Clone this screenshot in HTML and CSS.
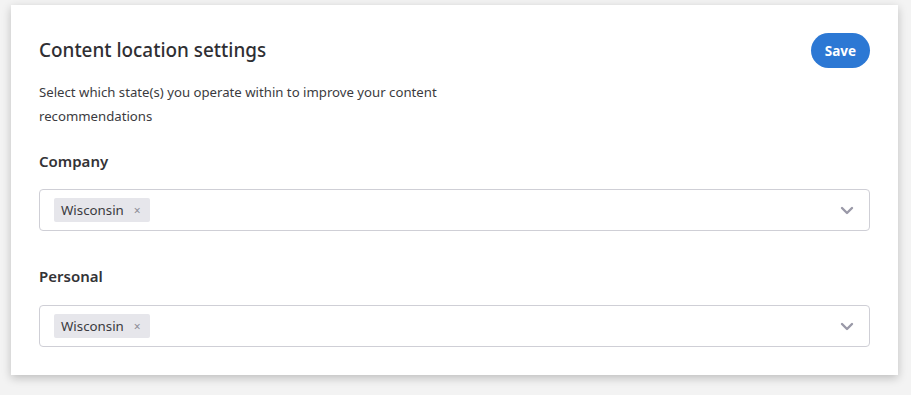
FILE: index.html
```html
<!DOCTYPE html>
<html>
<head>
<meta charset="utf-8">
<link rel="stylesheet" href="styles.css">
</head>
<body>
<div class="card">
  <div class="header">
    <h1 class="title">Content location settings</h1>
    <button class="save">Save</button>
  </div>
  <p class="desc">Select which state(s) you operate within to improve your content recommendations</p>
  <div class="label l-first">Company</div>
  <div class="select">
    <div class="chips"><span class="chip">Wisconsin<span class="x">×</span></span></div>
    <svg class="chev" width="14" height="9" viewBox="0 0 14 9"><path d="M2 2 L7 7 L12 2" fill="none" stroke="#9a99a8" stroke-width="2.4" stroke-linecap="round" stroke-linejoin="round"/></svg>
  </div>
  <div class="label l-second">Personal</div>
  <div class="select">
    <div class="chips"><span class="chip">Wisconsin<span class="x">×</span></span></div>
    <svg class="chev" width="14" height="9" viewBox="0 0 14 9"><path d="M2 2 L7 7 L12 2" fill="none" stroke="#9a99a8" stroke-width="2.4" stroke-linecap="round" stroke-linejoin="round"/></svg>
  </div>
</div>
</body>
</html>
```
FILE: styles.css
```css
html, body { margin: 0; padding: 0; }
body {
  background: #f3f3f3;
  font-family: "Noto Sans", "Open Sans", sans-serif;
  color: #333;
  height: 395px;
  overflow: hidden;
}
.card {
  margin: 5px 13px 0 11px;
  background: #fff;
  padding: 28px 28px 28px 28px;
  box-shadow: 0 3px 9px rgba(0,0,0,0.22);
}
.header {
  display: flex;
  justify-content: space-between;
  align-items: center;
  height: 35px;
}
.title {
  margin: 0;
  font-size: 18.9px;
  font-weight: 500;
  color: #2f2f33;
  line-height: 24px;
  position: relative;
  top: -1px;
}
.save {
  width: 59px;
  height: 35px;
  border: none;
  border-radius: 18px;
  background: #2c78d4;
  color: #fff;
  font-family: "Noto Sans", sans-serif;
  font-weight: 700;
  font-size: 13.5px;
  padding: 0;
}
.desc {
  margin: 12px 0 0 0;
  width: 420px;
  font-size: 13.2px;
  line-height: 24px;
  color: #3b3b40;
}
.label {
  font-size: 15px;
  font-weight: 600;
  line-height: 24px;
  color: #333336;
}
.l-first { margin-top: 21px; margin-bottom: 16px; }
.l-second { margin-top: 33px; margin-bottom: 17px; }
.select {
  height: 40px;
  border: 1px solid #cfcfd6;
  border-radius: 4px;
  display: flex;
  align-items: center;
  justify-content: space-between;
  padding: 0 15px 0 14px;
}
.chip {
  display: inline-flex;
  align-items: center;
  height: 24px;
  width: 96px;
  box-sizing: border-box;
  padding-left: 7px;
  background: #e6e6eb;
  border-radius: 2px;
  font-size: 13.3px;
  color: #3a3a40;
}
.x {
  margin-left: 10px;
  font-size: 12px;
  color: #8c8c96;
}
.chev { display: block; }
```
